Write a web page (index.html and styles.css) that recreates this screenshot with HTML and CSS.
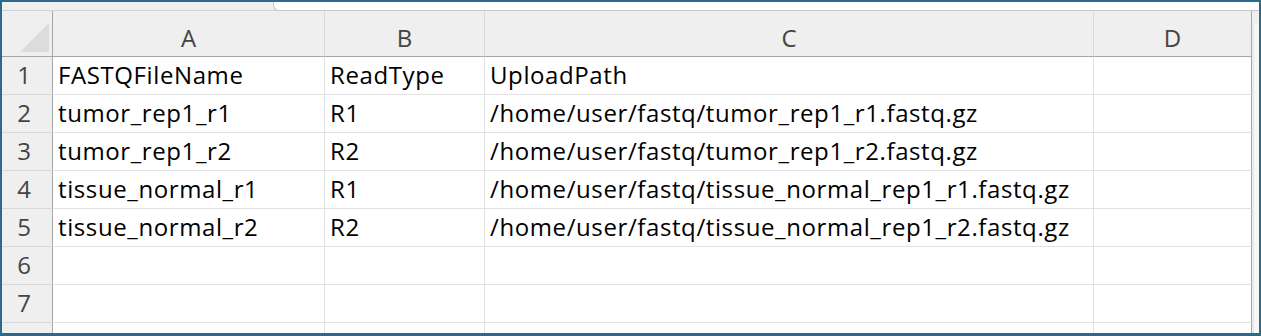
FILE: index.html
```html
<!DOCTYPE html>
<html>
<head>
<meta charset="utf-8">
<link rel="stylesheet" href="styles.css">
</head>
<body>
<div class="frame">
  <div class="topstrip"><div class="formula"></div></div>
  <div class="body">
    <div class="sheet">
      <div class="hdr corner"><div class="tri"></div></div>
      <div class="hdr col">A</div>
      <div class="hdr col">B</div>
      <div class="hdr col">C</div>
      <div class="hdr col last">D</div>

      <div class="rh">1</div>
      <div class="c">FASTQFileName</div><div class="c">ReadType</div><div class="c">UploadPath</div><div class="c last"></div>
      <div class="rh">2</div>
      <div class="c">tumor_rep1_r1</div><div class="c">R1</div><div class="c">/home/user/fastq/tumor_rep1_r1.fastq.gz</div><div class="c last"></div>
      <div class="rh">3</div>
      <div class="c">tumor_rep1_r2</div><div class="c">R2</div><div class="c">/home/user/fastq/tumor_rep1_r2.fastq.gz</div><div class="c last"></div>
      <div class="rh">4</div>
      <div class="c">tissue_normal_r1</div><div class="c">R1</div><div class="c">/home/user/fastq/tissue_normal_rep1_r1.fastq.gz</div><div class="c last"></div>
      <div class="rh">5</div>
      <div class="c">tissue_normal_r2</div><div class="c">R2</div><div class="c">/home/user/fastq/tissue_normal_rep1_r2.fastq.gz</div><div class="c last"></div>
      <div class="rh">6</div>
      <div class="c"></div><div class="c"></div><div class="c"></div><div class="c last"></div>
      <div class="rh">7</div>
      <div class="c"></div><div class="c"></div><div class="c"></div><div class="c last"></div>
      <div class="rh">8</div>
      <div class="c"></div><div class="c"></div><div class="c"></div><div class="c last"></div>
    </div>
    <div class="gutter"><div class="vbar"></div></div>
  </div>
</div>
</body>
</html>
```
FILE: styles.css
```css
html, body {
  margin: 0;
  padding: 0;
  background: #ffffff;
}
.frame {
  width: 1261px;
  height: 336px;
  box-sizing: border-box;
  border: 2px solid #2c6a8c;
  border-bottom-width: 3px;
  background: #efefef;
  overflow: hidden;
  display: flex;
  flex-direction: column;
  font-family: "Open Sans", "Noto Sans", sans-serif;
}
.topstrip {
  height: 8px;
  flex: none;
  display: flex;
  padding-left: 271px;
  border-bottom: 1px solid #d2d2d2;
}
.formula {
  flex: 1;
  background: #ffffff;
  border-left: 1px solid #c8c8c8;
  border-bottom: 1px solid #c8c8c8;
  border-bottom-left-radius: 6px;
  margin-bottom: -1px;
}
.body {
  flex: 1;
  display: flex;
  min-height: 0;
}
.sheet {
  display: grid;
  grid-template-columns: 51px 272px 160px 609px 158px;
  grid-template-rows: 46px repeat(8, 38px);
  flex: none;
  width: 1250px;
}
.hdr {
  box-sizing: border-box;
  background: #efefef;
  border-bottom: 1px solid #a6a6a6;
  border-right: 1px solid #d9d9d9;
  color: #444444;
  font-size: 24px;
  line-height: 31px;
  display: flex;
  align-items: flex-end;
  justify-content: center;
  padding-bottom: 3px;
}
.hdr.corner {
  border-right: 1px solid #a6a6a6;
  position: relative;
}
.tri {
  position: absolute;
  right: 3px;
  bottom: 4px;
  width: 29px;
  height: 29px;
  background: #dcdcdc;
  clip-path: polygon(100% 0, 100% 100%, 0 100%);
}
.hdr.last {
  border-right: 1px solid #a6a6a6;
}
.rh {
  box-sizing: border-box;
  background: #efefef;
  border-right: 1px solid #a6a6a6;
  border-bottom: 1px solid #d9d9d9;
  color: #444444;
  font-size: 24px;
  line-height: 31px;
  display: flex;
  align-items: flex-end;
  justify-content: center;
  padding-bottom: 4px;
  padding-right: 6px;
}
.c {
  box-sizing: border-box;
  background: #ffffff;
  border-right: 1px solid #e1e1e1;
  border-bottom: 1px solid #e1e1e1;
  color: #000000;
  font-size: 24px;
  letter-spacing: 0.6px;
  line-height: 31px;
  display: flex;
  align-items: flex-end;
  padding: 0 0 4px 5px;
  white-space: nowrap;
}
.c.last {
  border-right: 1px solid #a6a6a6;
}
.gutter {
  flex: 1;
  background: #efefef;
  display: flex;
  justify-content: flex-end;
  padding-top: 12px;
}
.vbar {
  width: 5px;
  background: #f7f7f7;
  border-left: 1px solid #e6e6e6;
}
```
